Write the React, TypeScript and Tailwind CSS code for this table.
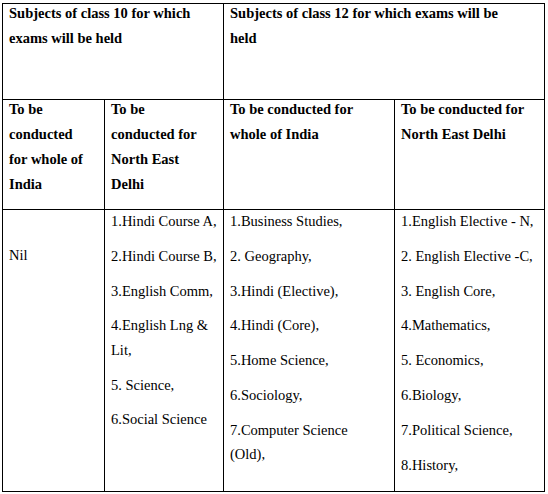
import React from "react";

function Items({ items }: { items: string[][] }) {
  return (
    <div>
      {items.map((lines, i) => (
        <p key={i} className="mb-[10.3px] leading-[24.5px]">
          {lines.map((l, j) => (
            <React.Fragment key={j}>
              {j > 0 && <br />}
              {l}
            </React.Fragment>
          ))}
        </p>
      ))}
    </div>
  );
}

export default function App() {
  const cell = "border border-black align-top pl-[6px] pr-[2px]";
  return (
    <div className="bg-white w-[548px] h-[494px] pt-[3px] pl-[2px] text-black text-[14.5px] font-['Liberation_Serif','Times_New_Roman',serif]">
      <table className="table-fixed border-collapse w-[542px] font-['Liberation_Serif','Times_New_Roman',serif]">
        <colgroup>
          <col className="w-[102px]" />
          <col className="w-[119px]" />
          <col className="w-[171px]" />
          <col className="w-[150px]" />
        </colgroup>
        <tbody>
          <tr className="h-[96px] font-bold">
            <td colSpan={2} className={`${cell} leading-[25px]`}>
              <div className="-mt-[3px]">
                Subjects of class 10 for which
                <br />
                exams will be held
              </div>
            </td>
            <td colSpan={2} className={`${cell} leading-[25px]`}>
              <div className="-mt-[3px]">
                Subjects of class 12 for which exams will be
                <br />
                held
              </div>
            </td>
          </tr>
          <tr className="h-[110px] font-bold">
            <td className={`${cell} leading-[25px]`}>
              <div className="-mt-[3px]">
                To be
                <br />
                conducted
                <br />
                for whole of
                <br />
                India
              </div>
            </td>
            <td className={`${cell} leading-[25px]`}>
              <div className="-mt-[3px]">
                To be
                <br />
                conducted for
                <br />
                North East
                <br />
                Delhi
              </div>
            </td>
            <td className={`${cell} leading-[25px]`}>
              <div className="-mt-[3px]">
                To be conducted for
                <br />
                whole of India
              </div>
            </td>
            <td className={`${cell} leading-[25px]`}>
              <div className="-mt-[3px]">
                To be conducted for
                <br />
                North East Delhi
              </div>
            </td>
          </tr>
          <tr className="h-[282px]">
            <td className={cell}>
              <div className="-mt-[1px] pt-[34px] leading-[24.5px]">Nil</div>
            </td>
            <td className={cell}>
              <div className="-mt-[1px]">
                <Items
                  items={[
                    ["1.Hindi Course A,"],
                    ["2.Hindi Course B,"],
                    ["3.English Comm,"],
                    ["4.English Lng &", "Lit,"],
                    ["5. Science,"],
                    ["6.Social Science"],
                  ]}
                />
              </div>
            </td>
            <td className={cell}>
              <div className="-mt-[1px]">
                <Items
                  items={[
                    ["1.Business Studies,"],
                    ["2. Geography,"],
                    ["3.Hindi (Elective),"],
                    ["4.Hindi (Core),"],
                    ["5.Home Science,"],
                    ["6.Sociology,"],
                    ["7.Computer Science", "(Old),"],
                  ]}
                />
              </div>
            </td>
            <td className={cell}>
              <div className="-mt-[1px]">
                <Items
                  items={[
                    ["1.English Elective - N,"],
                    ["2. English Elective -C,"],
                    ["3. English Core,"],
                    ["4.Mathematics,"],
                    ["5. Economics,"],
                    ["6.Biology,"],
                    ["7.Political Science,"],
                    ["8.History,"],
                  ]}
                />
              </div>
            </td>
          </tr>
        </tbody>
      </table>
    </div>
  );
}
